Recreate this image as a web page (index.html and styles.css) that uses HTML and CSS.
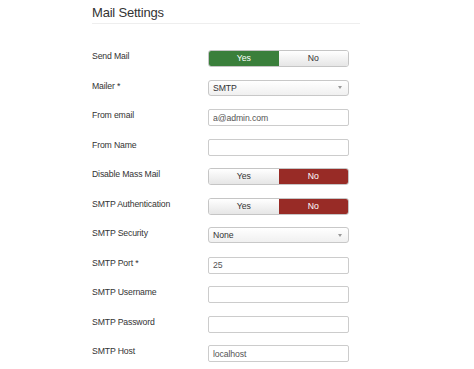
FILE: index.html
```html
<!DOCTYPE html>
<html>
<head>
<meta charset="utf-8">
<link rel="stylesheet" href="styles.css">
</head>
<body>
<div class="page">
  <h2 class="title">Mail Settings</h2>
  <div class="form">
    <div class="label">Send Mail</div>
    <div class="toggle"><span class="opt on-yes">Yes</span><span class="opt">No</span></div>

    <div class="label">Mailer *</div>
    <div class="select"><span>SMTP</span><span class="caret"></span></div>

    <div class="label">From email</div>
    <input class="field" type="text" value="a@admin.com">

    <div class="label">From Name</div>
    <input class="field" type="text" value="">

    <div class="label">Disable Mass Mail</div>
    <div class="toggle"><span class="opt">Yes</span><span class="opt on-no">No</span></div>

    <div class="label">SMTP Authentication</div>
    <div class="toggle"><span class="opt">Yes</span><span class="opt on-no">No</span></div>

    <div class="label">SMTP Security</div>
    <div class="select"><span>None</span><span class="caret"></span></div>

    <div class="label">SMTP Port *</div>
    <input class="field" type="text" value="25">

    <div class="label">SMTP Username</div>
    <input class="field" type="text" value="">

    <div class="label">SMTP Password</div>
    <input class="field" type="text" value="">

    <div class="label">SMTP Host</div>
    <input class="field" type="text" value="localhost">
  </div>
</div>
</body>
</html>
```
FILE: styles.css
```css
html, body {
  margin: 0;
  padding: 0;
  background: #ffffff;
}
body {
  font-family: "Liberation Sans", Arial, sans-serif;
  color: #333333;
}
.page {
  padding-left: 92px;
}
.title {
  margin: 0;
  width: 268px;
  padding-top: 5px;
  padding-bottom: 3px;
  font-size: 13px;
  line-height: 15px;
  font-weight: normal;
  letter-spacing: -0.2px;
  color: #333333;
  border-bottom: 1px solid #eeeeee;
}
.form {
  margin-top: 26px;
  display: grid;
  grid-template-columns: 116px 141px;
  grid-auto-rows: 17px;
  row-gap: 12.5px;
  align-items: start;
}
.label {
  font-size: 8.7px;
  line-height: 13px;
  letter-spacing: -0.15px;
  color: #333333;
  white-space: nowrap;
}
.toggle {
  display: flex;
  height: 17px;
  box-sizing: border-box;
  border: 1px solid #c5c5c5;
  border-radius: 3px;
  overflow: hidden;
}
.opt {
  flex: 1;
  text-align: center;
  font-size: 8.7px;
  line-height: 15px;
  color: #333333;
  background: linear-gradient(#ffffff, #e6e6e6);
}
.opt + .opt {
  border-left: 1px solid #d0d0d0;
}
.on-yes {
  background: #3a7f3b;
  color: #ffffff;
}
.on-no {
  background: #982b26;
  color: #ffffff;
}
.on-yes + .opt, .opt + .on-no {
  border-left: none;
}
.select {
  display: flex;
  align-items: center;
  justify-content: space-between;
  height: 16px;
  box-sizing: border-box;
  padding: 0 6px 0 4px;
  border: 1px solid #c8c8c8;
  border-radius: 3px;
  background: linear-gradient(#ffffff, #f0f0f0);
  font-size: 8.7px;
  color: #333333;
  letter-spacing: -0.1px;
}
.caret {
  width: 0;
  height: 0;
  border-left: 2px solid transparent;
  border-right: 2px solid transparent;
  border-top: 3px solid #999999;
}
.field {
  display: block;
  width: 141px;
  height: 17px;
  box-sizing: border-box;
  margin: 0;
  padding: 0 4px;
  border: 1px solid #cccccc;
  border-radius: 2px;
  background: #ffffff;
  font-family: "Liberation Sans", Arial, sans-serif;
  font-size: 8.7px;
  letter-spacing: -0.1px;
  color: #555555;
  outline: none;
}
```
